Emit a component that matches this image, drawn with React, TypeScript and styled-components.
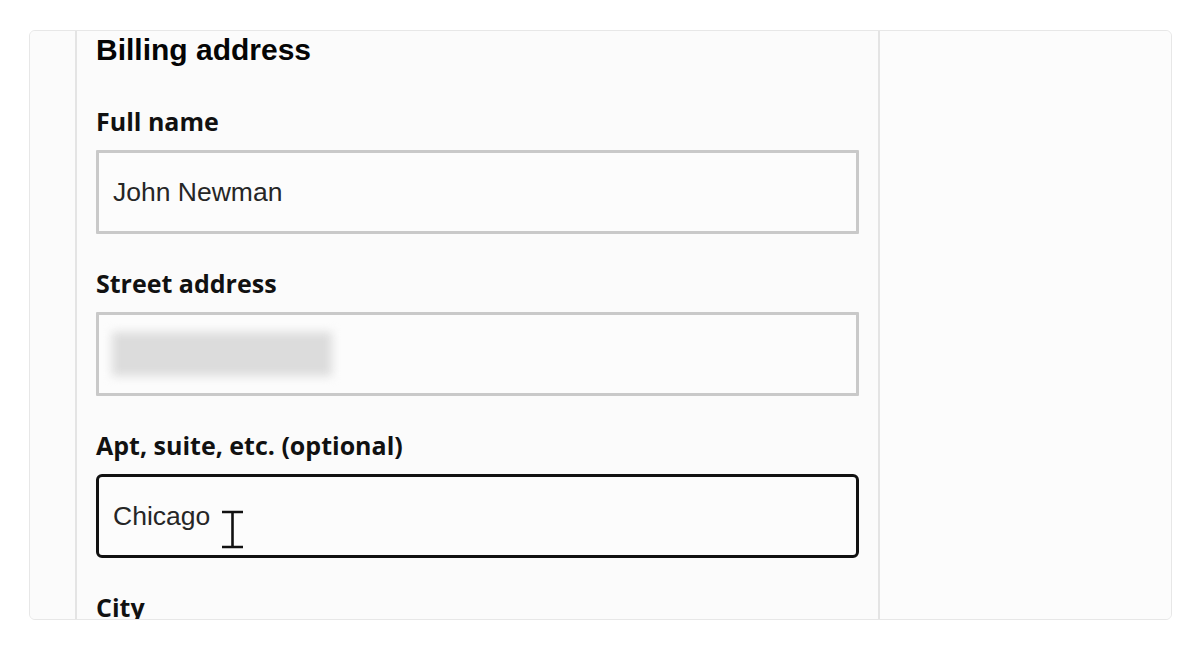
import styled, { createGlobalStyle } from 'styled-components';

const GlobalStyle = createGlobalStyle`
  html, body {
    margin: 0;
    padding: 0;
    background: #ffffff;
    overflow: hidden;
  }
`;

const Page = styled.div`
  width: 1200px;
  height: 649px;
  padding: 30px 28px 0 29px;
  box-sizing: border-box;
  background: #ffffff;
`;

const Card = styled.div`
  height: 590px;
  box-sizing: border-box;
  border: 1px solid #e7e7e7;
  border-radius: 6px;
  background: #fbfbfb;
  display: grid;
  grid-template-columns: 45px 805px 1fr;
  overflow: hidden;
`;

const Gutter = styled.div`
  background: #fbfbfb;
`;

const Main = styled.section`
  border-left: 2px solid #e4e4e4;
  border-right: 2px solid #e4e4e4;
  padding: 4px 19px 0 19px;
  display: flex;
  flex-direction: column;
  background: #fbfbfb;
`;

const Aside = styled.aside`
  background: #fcfcfc;
`;

const Title = styled.h2`
  margin: 0 0 41px;
  font-family: 'Liberation Sans', Arial, sans-serif;
  font-weight: 700;
  font-size: 30px;
  line-height: 30px;
  color: #050505;
`;

const Field = styled.div`
  display: flex;
  flex-direction: column;
  margin-bottom: 34px;
`;

const Label = styled.label`
  font-family: 'Open Sans', 'Noto Sans', sans-serif;
  font-weight: 700;
  font-size: 25px;
  line-height: 30px;
  color: #111;
  margin-bottom: 14px;
`;

const Box = styled.div<{ $focused?: boolean }>`
  position: relative;
  height: 84px;
  box-sizing: border-box;
  border: 3px solid ${(p) => (p.$focused ? '#111' : '#c9c9c9')};
  border-radius: ${(p) => (p.$focused ? '6px' : '1px')};
  background: #fcfcfc;
  display: flex;
  align-items: center;
  padding: 0 14px;
  font-family: 'Liberation Sans', Arial, sans-serif;
  font-size: 26.5px;
  color: #262626;
`;

const Blurred = styled.span`
  display: block;
  width: 220px;
  height: 44px;
  margin-left: -1px;
  background: #dcdcdc;
  filter: blur(5px);
`;

const Cursor = styled.svg`
  position: absolute;
  left: 122px;
  top: 33px;
`;

export default function App() {
  return (
    <>
      <GlobalStyle />
      <Page>
        <Card>
          <Gutter />
          <Main>
            <Title>Billing address</Title>
            <Field>
              <Label>Full name</Label>
              <Box>John Newman</Box>
            </Field>
            <Field>
              <Label>Street address</Label>
              <Box>
                <Blurred />
              </Box>
            </Field>
            <Field>
              <Label>Apt, suite, etc. (optional)</Label>
              <Box $focused>
                Chicago
                <Cursor width="24" height="40" viewBox="0 0 24 40">
                  <path
                    d="M1 2 H22 M1 37 H22 M11.5 2 V37"
                    stroke="#111"
                    strokeWidth="2.6"
                    fill="none"
                  />
                </Cursor>
              </Box>
            </Field>
            <Field>
              <Label>City</Label>
            </Field>
          </Main>
          <Aside />
        </Card>
      </Page>
    </>
  );
}
